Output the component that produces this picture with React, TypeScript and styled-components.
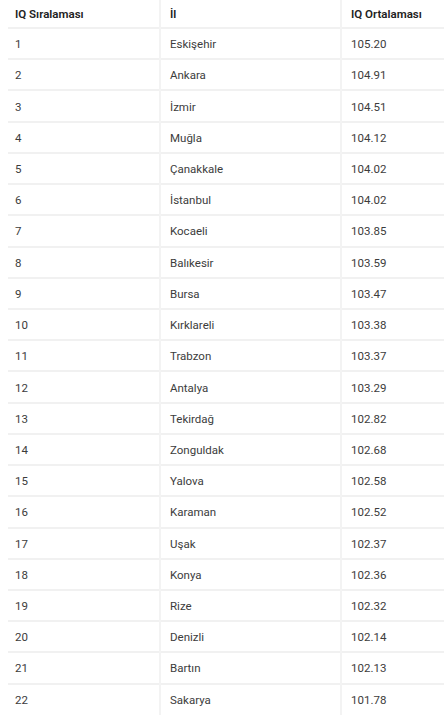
import React from "react";
import styled, { createGlobalStyle } from "styled-components";

const Global = createGlobalStyle`
  html, body { margin: 0; padding: 0; background: #fff; overflow: hidden; }
  body { padding-left: 8px; font-family: Roboto, "Noto Sans", Arial, sans-serif; }
`;

const Table = styled.table`
  width: 436px;
  border-collapse: collapse;
  table-layout: fixed;
  font-size: 11.5px;
  color: #3c3c3c;
`;

const Col = styled.col<{ $w: number }>`
  width: ${(p) => p.$w}px;
`;

const HeadRow = styled.tr`
  height: 28px;
  border-bottom: 2px solid #f1f1f1;
`;

const Row = styled.tr`
  height: 31.23px;
  border-bottom: 2px solid #f1f1f1;
  &:last-child { border-bottom: none; }
`;

const Th = styled.th<{ $first?: boolean }>`
  text-align: left;
  font-weight: 600;
  color: #222;
  padding: 0 0 0 ${(p) => (p.$first ? 7 : 9)}px;
  border-left: ${(p) => (p.$first ? "none" : "2px solid #f3f3f3")};
  vertical-align: middle;
  white-space: nowrap;
`;

const Td = styled.td<{ $first?: boolean }>`
  padding: 1px 0 0 ${(p) => (p.$first ? 7 : 9)}px;
  border-left: ${(p) => (p.$first ? "none" : "2px solid #f3f3f3")};
  vertical-align: middle;
  white-space: nowrap;
`;

const data: [string, string][] = [
  ["Eskişehir", "105.20"],
  ["Ankara", "104.91"],
  ["İzmir", "104.51"],
  ["Muğla", "104.12"],
  ["Çanakkale", "104.02"],
  ["İstanbul", "104.02"],
  ["Kocaeli", "103.85"],
  ["Balıkesir", "103.59"],
  ["Bursa", "103.47"],
  ["Kırklareli", "103.38"],
  ["Trabzon", "103.37"],
  ["Antalya", "103.29"],
  ["Tekirdağ", "102.82"],
  ["Zonguldak", "102.68"],
  ["Yalova", "102.58"],
  ["Karaman", "102.52"],
  ["Uşak", "102.37"],
  ["Konya", "102.36"],
  ["Rize", "102.32"],
  ["Denizli", "102.14"],
  ["Bartın", "102.13"],
  ["Sakarya", "101.78"],
];

export default function App() {
  return (
    <>
      <Global />
      <Table>
        <colgroup>
          <Col $w={152} />
          <Col $w={181} />
          <Col $w={103} />
        </colgroup>
        <thead>
          <HeadRow>
            <Th $first>IQ Sıralaması</Th>
            <Th>İl</Th>
            <Th>IQ Ortalaması</Th>
          </HeadRow>
        </thead>
        <tbody>
          {data.map(([city, iq], i) => (
            <Row key={city}>
              <Td $first>{i + 1}</Td>
              <Td>{city}</Td>
              <Td>{iq}</Td>
            </Row>
          ))}
        </tbody>
      </Table>
    </>
  );
}
